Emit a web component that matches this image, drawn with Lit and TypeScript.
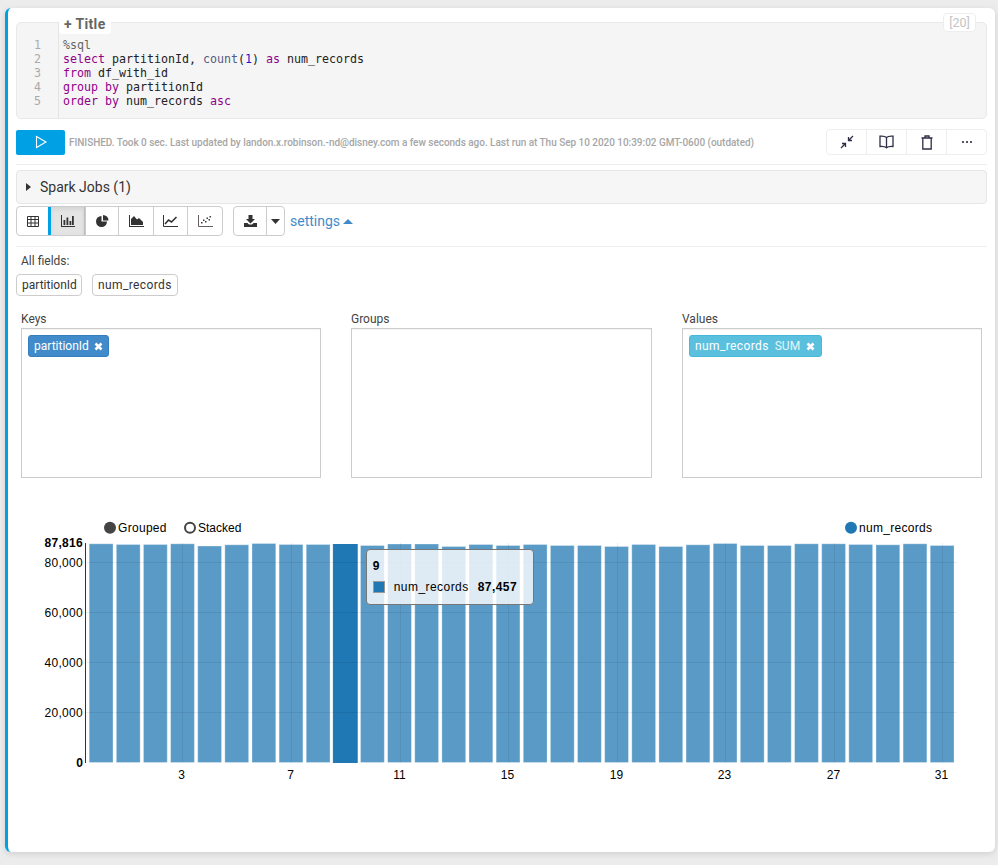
import { LitElement, html, css, svg } from "lit";
import { customElement } from "lit/decorators.js";

const tops = [543.3,544,544,543.3,545.5,544.3,543,544,544,544,545,543.5,543.5,546,544,545,544,545,545,546,544,546,544.3,543,545,545,543.3,543.3,544,544.3,543.3,545];
const X0 = 88.7, STEP = 27.13, BW = 24.8, Y0 = 762.5;

@customElement("app-root")
export class AppRoot extends LitElement {
  static styles = css`
    :host { display: block; height: 865px; background: #ececec; font-family: Roboto, "Liberation Sans", sans-serif; color: #333; overflow: hidden; }
    * { box-sizing: border-box; }
    .card { margin: 8px 3px 0 5px; height: 844px; background: #fff; border-left: 3px solid #00a0e4; border-radius: 6px; box-shadow: 0 2px 6px rgba(0,0,0,.12); padding: 6px 8px 0 8px; position: relative; }
    .editor { height: 97px; background: #f5f5f5; border: 1px solid #e9e9e9; border-radius: 5px; display: flex; }
    .wrap { padding-top: 8px; position: relative; }
    .title { position: absolute; left: 43px; top: 0; width: 52px; height: 20px; background: #fff; border-radius: 4px; font-size: 14px; font-weight: 700; color: #666; line-height: 20px; padding-left: 5px; white-space: nowrap; letter-spacing: .35px; }
    .num { position: absolute; right: 11px; top: -1px; width: 33px; height: 19px; background: #fff; border: 1px solid #eee; border-radius: 4px; font-size: 12.5px; color: #c4c4c4; line-height: 17px; text-align: center; }
    .gutter { width: 42px; border-right: 1px solid #e4e4e4; padding: 15px 17px 0 0; text-align: right; color: #aaa; font: 11.6px/14px "DejaVu Sans Mono", monospace; }
    .code { padding: 15px 0 0 4px; font: 11.63px/14px "DejaVu Sans Mono", monospace; color: #222; white-space: pre; }
    .kw { color: #90008a; } .fn { color: #555a80; } .n { color: #1a1ac8; } .pc { color: #666; }
    .run { display: flex; align-items: center; margin-top: 10px; height: 26px; }
    .play { width: 49px; height: 25px; background: #00a0e4; border-radius: 2px; display: flex; align-items: center; justify-content: center; }
    .status { margin-left: 4px; font-size: 10px; font-weight: 500; color: #a6a6a6; white-space: nowrap; flex: 1; letter-spacing: -.033px; }
    .acts { display: flex; width: 161px; height: 26px; border: 1px solid #eee; border-radius: 4px; }
    .acts div { flex: 1; display: flex; align-items: center; justify-content: center; border-left: 1px solid #eee; }
    .acts div:first-child { border-left: 0; }
    .hr { height: 1px; background: #eee; }
    .jobs { margin-top: 5px; height: 34px; background: #f6f6f6; border: 1px solid #e6e6e6; border-radius: 4px; display: flex; align-items: center; padding-left: 9px; font-size: 14px; color: #333; }
    .tri { width: 0; height: 0; border-left: 5px solid #333; border-top: 4.5px solid transparent; border-bottom: 4.5px solid transparent; margin-right: 9px; }
    .tools { display: flex; align-items: center; margin-top: 2px; height: 30px; }
    .group { display: flex; height: 30px; border: 1px solid #ccc; border-radius: 4px; overflow: hidden; }
    .group div { display: flex; align-items: center; justify-content: center; border-left: 1px solid #ccc; height: 100%; }
    .group div:first-child { border-left: 0; }
    .group .active { background: #e4e4e4; border-left: 3px solid #00a0e4; border-right: 1px solid #bbb; box-shadow: inset 0 2px 4px rgba(0,0,0,.08); }
    .settings { margin-left: 5px; font-size: 14px; color: #428bca; display: flex; align-items: center; gap: 3px; }
    .up { width: 0; height: 0; border-left: 5px solid transparent; border-right: 5px solid transparent; border-bottom: 5px solid #428bca; }
    .fields { padding: 7px 5px 0; font-size: 12px; color: #444; line-height: 14px; }
    .pills { display: flex; gap: 10px; margin-top: 6px; }
    .pill { height: 22px; border: 1px solid #ccc; border-radius: 4px; padding: 0 5px; font-size: 12px; line-height: 20px; color: #333; }
    .pill.p1 { width: 66px; white-space: nowrap; }
    .ls { letter-spacing: .38px; }
    .boxes { display: grid; grid-template-columns: 300px 301px 300px; justify-content: space-between; margin: 16px 5px 0; }
    .lbl { font-size: 12px; line-height: 14px; color: #444; margin-bottom: 2px; }
    .box { height: 150px; border: 1px solid #ccc; box-shadow: inset 0 1px 1px rgba(0,0,0,.05); padding: 6px; }
    .tag { display: inline-flex; align-items: center; height: 22px; border-radius: 3px; color: #fff; font-size: 12px; padding: 0 5px; gap: 5px; }
    .tag.a { background: #428bca; border: 1px solid #357ebd; }
    .tag.b { background: #5bc0de; border: 1px solid #46b8da; gap: 6px; padding-right: 6px; }
    .tag span.s { color: #e4f5fa; }
    .chart { position: relative; margin-top: 27px; height: 280px; }
    .chart svg { display: block; }
    .tip { position: absolute; left: 349.7px; top: 44.3px; width: 168px; height: 56px; background: rgba(255,255,255,.8); border: 1px solid #777; border-radius: 4px; font: 12px "Liberation Sans", sans-serif; color: #000; padding: 9px 6px; }
    .tip .h { font-weight: 700; line-height: 14px; }
    .tip .r { display: flex; align-items: center; margin-top: 7px; line-height: 14px; }
    .sq { width: 12px; height: 12px; background: #1f77b4; border: 1px solid #999; margin-right: 9px; }
    .tip b { margin-left: 9px; letter-spacing: .45px; }
    .tip .nm { letter-spacing: .45px; }
    .chart text { font-family: "Liberation Sans", sans-serif; font-size: 12px; fill: #000; }
    .chart .b { font-weight: 700; }
    .chart .sp { letter-spacing: .3px; }
  `;

  private chart() {
    const ticks = [3, 7, 11, 15, 19, 23, 27, 31];
    const ys: [string, number][] = [["80,000", 562.5], ["60,000", 612.5], ["40,000", 662.5], ["20,000", 712.5]];
    return svg`<svg width="971" height="280" viewBox="16 505 971 280" xmlns="http://www.w3.org/2000/svg">
      <circle cx="110" cy="527.7" r="6" fill="#444"/>
      <text class="sp" x="118" y="532">Grouped</text>
      <circle cx="190" cy="527.7" r="5" fill="#fff" stroke="#444" stroke-width="2"/>
      <text x="198" y="532">Stacked</text>
      <circle cx="851" cy="527.7" r="6" fill="#1f77b4"/>
      <text class="sp" x="859" y="532">num_records</text>
      ${tops.map((t, i) => svg`<rect x=${X0 + i * STEP + 0.5} y=${t + 0.5} width=${BW - 1} height=${Y0 - t - 0.5} fill="#1f77b4" fill-opacity=${i === 9 ? 1 : 0.74} stroke=${i === 9 ? "#1f77b4" : "#fff"} stroke-opacity=${i === 9 ? 1 : 0.3} stroke-width="1"/>`)}
      ${ys.map(([, y]) => svg`<line x1="85" x2="957" y1=${y} y2=${y} stroke="#000" stroke-opacity=".07"/>`)}
      ${ticks.map((v) => { const x = Math.round(X0 + v * STEP + BW / 2) + 0.5; return svg`<line x1=${x} x2=${x} y1="543" y2="762.5" stroke="#000" stroke-opacity=".07"/>
        <text x=${x - 1} y="779" text-anchor="middle">${v}</text>`; })}
      <line x1="85.5" x2="85.5" y1="543" y2="763" stroke="#333"/>
      <text class="b sp" x="83" y="547" text-anchor="end">87,816</text>
      ${ys.map(([l, y]) => svg`<text class="sp" x="83" y=${y + 4} text-anchor="end">${l}</text>`)}
      <text class="b" x="83" y="767" text-anchor="end">0</text>
    </svg>`;
  }

  render() {
    const ic = "#333";
    const w = (n: number, c: unknown, cls = "") => html`<div class=${cls} style="width:${n}px">${c}</div>`;
    return html`<div class="card">
      <div class="wrap">
        <div class="editor">
          <div class="gutter">1<br>2<br>3<br>4<br>5</div>
          <div class="code"><span class="pc">%sql</span>
<span class="kw">select</span> partitionId, <span class="fn">count</span>(<span class="n">1</span>) <span class="kw">as</span> num_records
<span class="kw">from</span> df_with_id
<span class="kw">group by</span> partitionId
<span class="kw">order by</span> num_records <span class="kw">asc</span></div>
        </div>
        <div class="title">+ Title</div>
        <div class="num">[20]</div>
      </div>
      <div class="run">
        <div class="play"><svg width="14" height="14" viewBox="0 0 14 14"><path d="M2.5 1.5L12 7L2.5 12.5Z" fill="none" stroke="#fff" stroke-width="1.1"/></svg></div>
        <div class="status">FINISHED. Took 0 sec. Last updated by landon.x.robinson.-nd@disney.com a few seconds ago. Last run at Thu Sep 10 2020 10:39:02 GMT-0600 (outdated)</div>
        <div class="acts">
          <div><svg width="14" height="14" viewBox="0 0 14 14" fill="none" stroke="#2e2e45" stroke-width="1.3"><path d="M13 1L8.5 5.5M8.5 2V5.5H12M1 13L5.5 8.5M5.5 12V8.5H2"/></svg></div>
          <div><svg width="15" height="14" viewBox="0 0 15 14" fill="none" stroke="#2e2e45" stroke-width="1.3"><path d="M7.5 2.5C6 1.2 3 1 1 1.2V11.5C3 11.3 6 11.5 7.5 12.8C9 11.5 12 11.3 14 11.5V1.2C12 1 9 1.2 7.5 2.5ZM7.5 2.5V13"/></svg></div>
          <div><svg width="12" height="15" viewBox="0 0 12 15" fill="none" stroke="#2e2e45" stroke-width="1.3"><path d="M0.5 3H11.5M4 3V1H8V3M1.8 3V14H10.2V3"/></svg></div>
          <div><svg width="12" height="4" viewBox="0 0 12 4" fill="#2e2e45"><circle cx="2" cy="2" r="1.1"/><circle cx="6" cy="2" r="1.1"/><circle cx="10" cy="2" r="1.1"/></svg></div>
        </div>
      </div>
      <div class="hr" style="margin-top:9px"></div>
      <div class="jobs"><div class="tri"></div>Spark Jobs (1)</div>
      <div class="tools">
        <div class="group">
          ${w(31, html`<svg width="12" height="11" viewBox="0 0 12 11" fill="none" stroke=${ic}><path d="M.5.5H11.5V10.5H.5ZM.5 3.5H11.5M.5 7H11.5M4 .5V10.5M8 .5V10.5"/></svg>`)}
          ${w(37, html`<svg width="14" height="12" viewBox="0 0 14 12" fill=${ic}><path d="M0 0H1V11H14V12H0Z"/><rect x="2.5" y="5" width="1.8" height="5"/><rect x="5.5" y="2.5" width="1.8" height="7.5"/><rect x="8.5" y="6" width="1.8" height="4"/><rect x="11" y="1" width="1.8" height="9"/></svg>`, "active")}
          ${w(33, html`<svg width="13" height="12" viewBox="0 0 13 12" fill=${ic}><path d="M5.5 1A5.5 5.5 0 1 0 11 6.5H5.5Z"/><path d="M7 0A5.5 5.5 0 0 1 12.5 5.5H7Z"/></svg>`)}
          ${w(35, html`<svg width="15" height="12" viewBox="0 0 15 12" fill=${ic}><path d="M0 0H1V11H15V12H0Z"/><path d="M2 10V4L5 1L8 4.5L10 3L14 7V10Z"/></svg>`)}
          ${w(34, html`<svg width="15" height="12" viewBox="0 0 15 12"><path d="M.5 0V11.5H15" fill="none" stroke=${ic}/><path d="M2 9L5.5 5L8.5 7L13.5 2" fill="none" stroke=${ic} stroke-width="1.6"/></svg>`)}
          ${w(35, html`<svg width="15" height="12" viewBox="0 0 15 12"><path d="M.5 0V11.5H15" fill="none" stroke="#6a5d60"/><g fill="#3a3a45"><rect x="3" y="7" width="1.5" height="1.5"/><rect x="5" y="4.5" width="1.5" height="1.5"/><rect x="7" y="6" width="1.5" height="1.5"/><rect x="8.5" y="2.5" width="1.5" height="1.5"/><rect x="10.5" y="4" width="1.5" height="1.5"/><rect x="11.5" y="1" width="1.5" height="1.5"/></g></svg>`)}
        </div>
        <div class="group" style="margin-left:10px">
          ${w(32, html`<svg width="13" height="12" viewBox="0 0 13 12" fill=${ic}><path d="M4.5 0H8.5V4H11L6.5 8.5L2 4H4.5Z"/><path d="M0 8H3.5L5 9.5H8L9.5 8H13V12H0Z"/></svg>`)}
          ${w(18, html`<svg width="9" height="5" viewBox="0 0 9 5" fill=${ic}><path d="M0 0H9L4.5 5Z"/></svg>`)}
        </div>
        <div class="settings">settings<span class="up"></span></div>
      </div>
      <div class="hr" style="margin-top:10px"></div>
      <div class="fields">
        All fields:
      </div>
      <div class="pills"><div class="pill p1">partitionId</div><div class="pill ls">num_records</div></div>
      <div class="boxes">
        <div><div class="lbl">Keys</div><div class="box"><div class="tag a">partitionId <svg width="9" height="9" viewBox="0 0 9 9"><path d="M1.5 1.5L7.5 7.5M7.5 1.5L1.5 7.5" stroke="#fff" stroke-width="2.6"/></svg></div></div></div>
        <div><div class="lbl">Groups</div><div class="box"></div></div>
        <div><div class="lbl">Values</div><div class="box"><div class="tag b"><span class="ls">num_records</span> <span class="s">SUM</span> <svg width="9" height="9" viewBox="0 0 9 9"><path d="M1.5 1.5L7.5 7.5M7.5 1.5L1.5 7.5" stroke="#fff" stroke-width="2.6"/></svg></div></div></div>
      </div>
      <div class="chart">
        ${this.chart()}
        <div class="tip"><div class="h">9</div><div class="r"><div class="sq"></div><span class="nm">num_records</span><b>87,457</b></div></div>
      </div>
    </div>`;
  }
}
